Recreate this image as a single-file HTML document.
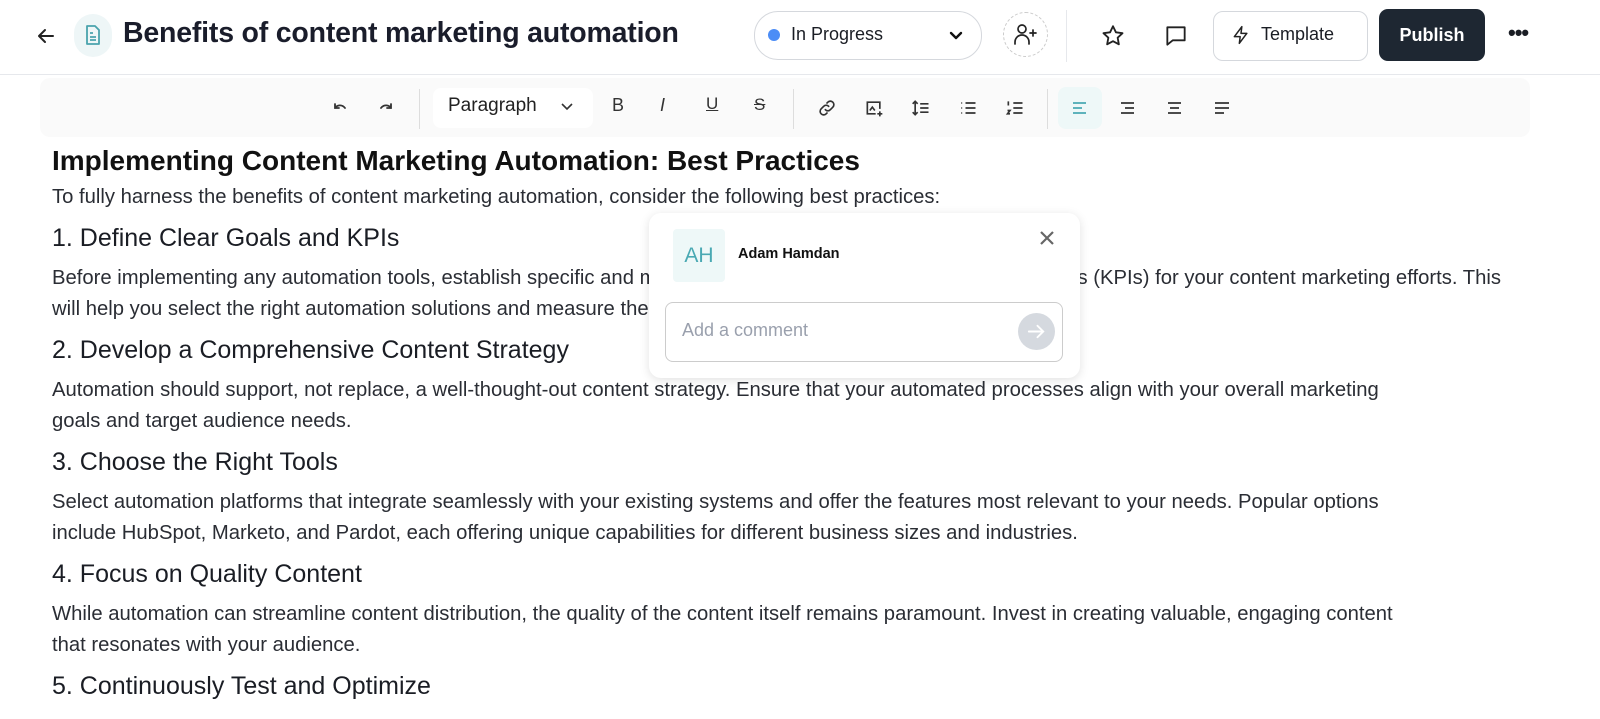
<!DOCTYPE html>
<html><head><meta charset="utf-8"><style>
*{margin:0;padding:0;box-sizing:border-box}
body{width:1600px;height:719px;overflow:hidden;background:#fff;font-family:"Liberation Sans",sans-serif;color:#1a1d24;position:relative}
.abs{position:absolute}
.hdr{position:absolute;left:0;top:0;width:1600px;height:75px;border-bottom:1px solid #e6e8ec}
.title{left:123px;top:17px;font-size:28.5px;font-weight:bold;color:#1a1d2b;letter-spacing:-0.2px;white-space:nowrap}
.btn{position:absolute;border:1px solid #d5d8dd;border-radius:10px;background:#fff}
.tb{left:40px;top:78px;width:1490px;height:59px;background:#fafafa;border-radius:10px}
.ic{position:absolute}
.p{position:absolute;left:52px;font-size:20.25px;color:#2a2d34;white-space:nowrap}
.h3{position:absolute;left:52px;font-size:25px;color:#1a1d24;white-space:nowrap}
</style></head><body>
<div class="hdr"></div>
<svg class="ic" style="left:34px;top:24px" width="24" height="24" viewBox="0 0 24 24" fill="none" stroke="#222" stroke-width="2" stroke-linecap="round" stroke-linejoin="round"><path d="M19 12H5M11 6l-6 6 6 6"/></svg>
<div class="abs" style="left:74px;top:14px;width:38px;height:43px;border-radius:19px;background:#eef6f7"></div>
<svg class="ic" style="left:81px;top:23px" width="24" height="24" viewBox="0 0 24 24" fill="none" stroke="#4aa3ad" stroke-width="1.8" stroke-linejoin="round"><path d="M6 3h8l4 4v14H6z"/><path d="M9 10h3M9 14h6M9 17h6"/></svg>
<div class="abs title">Benefits of content marketing automation</div>
<div class="btn" style="left:754px;top:11px;width:228px;height:49px;border-radius:24px"></div>
<div class="abs" style="left:768px;top:29px;width:12px;height:12px;border-radius:6px;background:#4c8df6"></div>
<div class="abs" style="left:791px;top:24px;font-size:18px">In Progress</div>
<svg class="ic" style="left:947px;top:27px" width="18" height="18" viewBox="0 0 18 18" fill="none" stroke="#111" stroke-width="2.4" stroke-linecap="round" stroke-linejoin="round"><path d="M4 6l5 5 5-5"/></svg>
<div class="abs" style="left:1003px;top:12px;width:45px;height:45px;border-radius:23px;border:1px dashed #ccc"></div>
<svg class="ic" style="left:1011px;top:21px" width="28" height="28" viewBox="0 0 28 28" fill="none" stroke="#222" stroke-width="1.7" stroke-linecap="round"><circle cx="11" cy="8" r="4"/><path d="M4 23v-2a7 7 0 0 1 14 0v2M22 9v6M19 12h6"/></svg>
<div class="abs" style="left:1066px;top:10px;width:1px;height:52px;background:#e6e8ec"></div>
<svg class="ic" style="left:1100px;top:23px" width="26" height="26" viewBox="0 0 24 24" fill="none" stroke="#222" stroke-width="1.7" stroke-linejoin="round"><path d="M12 3l2.7 5.6 6.1.8-4.5 4.2 1.1 6.1L12 16.8 6.6 19.7l1.1-6.1L3.2 9.4l6.1-.8z"/></svg>
<svg class="ic" style="left:1163px;top:23px" width="26" height="26" viewBox="0 0 24 24" fill="none" stroke="#222" stroke-width="1.7" stroke-linejoin="round"><path d="M4 4h16v12H9l-5 4z"/></svg>
<div class="btn" style="left:1213px;top:11px;width:155px;height:50px"></div>
<svg class="ic" style="left:1231px;top:25px" width="20" height="20" viewBox="0 0 24 24" fill="none" stroke="#222" stroke-width="1.8" stroke-linejoin="round"><path d="M13 2L4 14h7l-1 8 9-12h-7z"/></svg>
<div class="abs" style="left:1261px;top:24px;font-size:18px">Template</div>
<div class="abs" style="left:1379px;top:9px;width:106px;height:52px;border-radius:9px;background:#1e2732;color:#fff;font-size:18px;font-weight:bold;text-align:center;line-height:52px">Publish</div>
<div class="abs" style="left:1508px;top:20px;font-size:22px;font-weight:bold;letter-spacing:-1px">•••</div>

<div class="abs tb"></div>
<svg class="ic" style="left:330px;top:98px" width="20" height="20" viewBox="0 0 20 20" fill="none" stroke="#333" stroke-width="1.8" stroke-linecap="round"><path d="M5 6v4h4M5 10c2-3 7-4 10 0"/></svg>
<svg class="ic" style="left:376px;top:98px" width="20" height="20" viewBox="0 0 20 20" fill="none" stroke="#333" stroke-width="1.8" stroke-linecap="round"><path d="M15 6v4h-4M15 10c-2-3-7-4-10 0"/></svg>
<div class="abs" style="left:419px;top:89px;width:1px;height:40px;background:#ddd"></div>
<div class="abs" style="left:433px;top:88px;width:160px;height:40px;background:#fff;border-radius:8px"></div>
<div class="abs" style="left:448px;top:95px;font-size:19px;color:#222">Paragraph</div>
<svg class="ic" style="left:558px;top:99px" width="18" height="16" viewBox="0 0 18 16" fill="none" stroke="#333" stroke-width="1.6"><path d="M4 5l5 5 5-5"/></svg>
<div class="abs" style="left:612px;top:95px;font-size:18px;color:#333">B</div>
<div class="abs" style="left:660px;top:95px;font-size:18px;font-style:italic;color:#333">I</div>
<div class="abs" style="left:706px;top:94px;font-size:17px;color:#333;text-decoration:underline">U</div>
<div class="abs" style="left:754px;top:95px;font-size:17px;color:#333;text-decoration:line-through">S</div>
<div class="abs" style="left:793px;top:89px;width:1px;height:40px;background:#ddd"></div>
<svg class="ic" style="left:817px;top:98px" width="20" height="20" viewBox="0 0 24 24" fill="none" stroke="#333" stroke-width="2" stroke-linecap="round"><path d="M10 14a4 4 0 0 0 6 0l3-3a4 4 0 0 0-6-6l-1 1M14 10a4 4 0 0 0-6 0l-3 3a4 4 0 0 0 6 6l1-1"/></svg>
<svg class="ic" style="left:864px;top:98px" width="20" height="20" viewBox="0 0 24 24" fill="none" stroke="#333" stroke-width="2"><path d="M14 19H4V5h15v8"/><path d="M7 15l3-4 3 4M19 16v6M16 19h6"/></svg>
<svg class="ic" style="left:911px;top:98px" width="20" height="20" viewBox="0 0 24 24" fill="none" stroke="#333" stroke-width="2"><path d="M5 4v16M2 7l3-3 3 3M2 17l3 3 3-3M11 7h10M11 12h10M11 17h10"/></svg>
<svg class="ic" style="left:958px;top:98px" width="20" height="20" viewBox="0 0 24 24" fill="none" stroke="#333" stroke-width="2"><path d="M9 6h12M9 12h12M9 18h12M4 6h1M4 12h1M4 18h1"/></svg>
<svg class="ic" style="left:1005px;top:98px" width="20" height="20" viewBox="0 0 24 24" fill="none" stroke="#333" stroke-width="2"><path d="M10 6h11M10 12h11M10 18h11M4 4v5M3 15h3l-3 4h3"/></svg>
<div class="abs" style="left:1047px;top:89px;width:1px;height:40px;background:#ddd"></div>
<div class="abs" style="left:1058px;top:87px;width:44px;height:42px;background:#eef8f8;border-radius:8px"></div>
<svg class="ic" style="left:1070px;top:98px" width="20" height="20" viewBox="0 0 20 20" stroke="#4aa9b3" stroke-width="1.8"><path d="M3 5h13M3 10h9M3 15h13"/></svg>
<svg class="ic" style="left:1118px;top:98px" width="20" height="20" viewBox="0 0 20 20" stroke="#333" stroke-width="1.8"><path d="M3 5h13M7 10h9M3 15h13"/></svg>
<svg class="ic" style="left:1165px;top:98px" width="20" height="20" viewBox="0 0 20 20" stroke="#333" stroke-width="1.8"><path d="M3 5h13M5 10h9M3 15h13"/></svg>
<svg class="ic" style="left:1212px;top:98px" width="20" height="20" viewBox="0 0 20 20" stroke="#333" stroke-width="1.8"><path d="M3 5h14M3 10h14M3 15h9"/></svg>

<div class="abs" style="left:52px;top:145px;font-size:28px;font-weight:bold;color:#111;white-space:nowrap">Implementing Content Marketing Automation: Best Practices</div>
<div class="p" style="top:186px">To fully harness the benefits of content marketing automation, consider the following best practices:</div>
<div class="h3" style="top:224px">1. Define Clear Goals and KPIs</div>
<div class="p" style="top:267px">Before implementing any automation tools, establish specific and measurable goals and key performance indicators (KPIs) for your content marketing efforts. This</div>
<div class="p" style="top:298px">will help you select the right automation solutions and measure their effectiveness.</div>
<div class="h3" style="top:336px">2. Develop a Comprehensive Content Strategy</div>
<div class="p" style="top:379px">Automation should support, not replace, a well-thought-out content strategy. Ensure that your automated processes align with your overall marketing</div>
<div class="p" style="top:410px">goals and target audience needs.</div>
<div class="h3" style="top:448px">3. Choose the Right Tools</div>
<div class="p" style="top:491px">Select automation platforms that integrate seamlessly with your existing systems and offer the features most relevant to your needs. Popular options</div>
<div class="p" style="top:522px">include HubSpot, Marketo, and Pardot, each offering unique capabilities for different business sizes and industries.</div>
<div class="h3" style="top:560px">4. Focus on Quality Content</div>
<div class="p" style="top:603px">While automation can streamline content distribution, the quality of the content itself remains paramount. Invest in creating valuable, engaging content</div>
<div class="p" style="top:634px">that resonates with your audience.</div>
<div class="h3" style="top:672px">5. Continuously Test and Optimize</div>
<div class="abs" style="left:0;top:702px;width:1600px;height:17px;background:linear-gradient(#fff0,#fff 60%)"></div>

<div class="abs" style="left:649px;top:213px;width:431px;height:165px;background:#fff;border-radius:12px;box-shadow:0 2px 10px rgba(0,0,0,0.12)"></div>
<div class="abs" style="left:673px;top:229px;width:52px;height:53px;background:#eef8f8;border-radius:4px;color:#4aa9b3;font-size:21px;text-align:center;line-height:53px">AH</div>
<div class="abs" style="left:738px;top:246px;font-size:14.5px;font-weight:bold;color:#111">Adam Hamdan</div>
<svg class="ic" style="left:1038px;top:229px" width="18" height="18" viewBox="0 0 18 18" stroke="#666" stroke-width="2.2"><path d="M3 3l12 12M15 3L3 15"/></svg>
<div class="abs" style="left:665px;top:302px;width:398px;height:60px;border:1px solid #ccc;border-radius:8px"></div>
<div class="abs" style="left:682px;top:320px;font-size:18px;color:#9aa0ad">Add a comment</div>
<div class="abs" style="left:1018px;top:313px;width:37px;height:37px;border-radius:19px;background:#d5d9df"></div>
<svg class="ic" style="left:1025px;top:320px" width="23" height="23" viewBox="0 0 24 24" fill="none" stroke="#fff" stroke-width="2" stroke-linecap="round"><path d="M4 12h15M13 6l6 6-6 6"/></svg>
</body></html>
